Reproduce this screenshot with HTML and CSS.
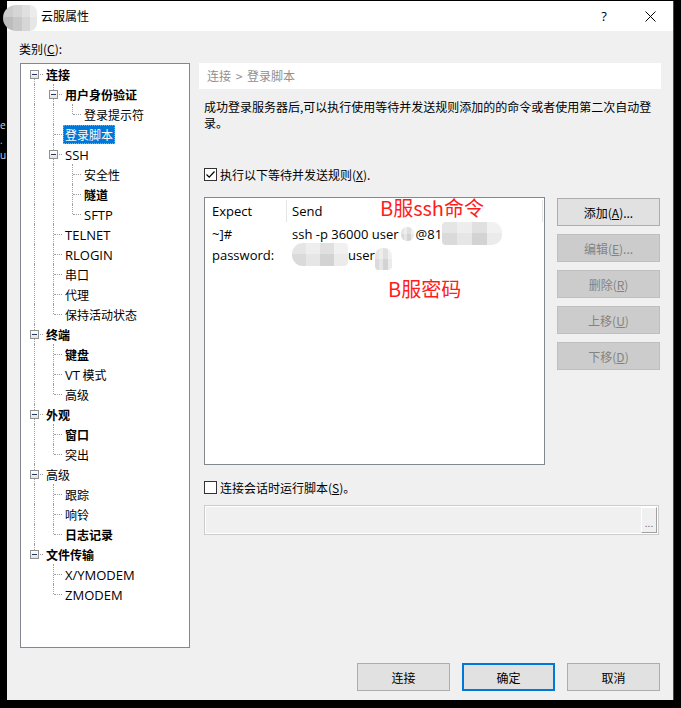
FILE: index.html
```html
<!DOCTYPE html>
<html lang="zh-CN">
<head>
  <meta charset="UTF-8">
  <title>云服属性</title>
  <link rel="stylesheet" href="styles.css">
</head>
<body>
  <div class="screen">
    <div class="backdrop"><span>e</span><span class="dot">.</span><span class="u">u</span></div>

    <div class="dialog">
      <div class="titlebar">
        <span class="app-icon"></span>
        <span class="title">云服属性</span>
        <span class="tb-btn tb-help">?</span>
        <span class="tb-btn">
          <svg width="11" height="11" viewBox="0 0 11 11"><path d="M0.5 0.5 L10.5 10.5 M10.5 0.5 L0.5 10.5" stroke="#000" stroke-width="1" fill="none"/></svg>
        </span>
      </div>

      <div class="body">
        <div class="cat-label">类别(<u>C</u>):</div>

        <div class="main">
          <!-- category tree -->
          <div class="tree">
            <div class="node"><span class="c f"><span class="xp"></span></span><span class="lbl b">连接</span></div>
            <div class="node"><span class="c v"></span><span class="c t"><span class="xp"></span></span><span class="lbl b">用户身份验证</span></div>
            <div class="node"><span class="c v"></span><span class="c v"></span><span class="c e"></span><span class="lbl">登录提示符</span></div>
            <div class="node"><span class="c v"></span><span class="c t"></span><span class="lbl sel">登录脚本</span></div>
            <div class="node"><span class="c v"></span><span class="c t"><span class="xp"></span></span><span class="lbl"><span class="en">SSH</span></span></div>
            <div class="node"><span class="c v"></span><span class="c v"></span><span class="c t"></span><span class="lbl">安全性</span></div>
            <div class="node"><span class="c v"></span><span class="c v"></span><span class="c t"></span><span class="lbl b">隧道</span></div>
            <div class="node"><span class="c v"></span><span class="c v"></span><span class="c e"></span><span class="lbl"><span class="en">SFTP</span></span></div>
            <div class="node"><span class="c v"></span><span class="c t"></span><span class="lbl"><span class="en">TELNET</span></span></div>
            <div class="node"><span class="c v"></span><span class="c t"></span><span class="lbl"><span class="en">RLOGIN</span></span></div>
            <div class="node"><span class="c v"></span><span class="c t"></span><span class="lbl">串口</span></div>
            <div class="node"><span class="c v"></span><span class="c t"></span><span class="lbl">代理</span></div>
            <div class="node"><span class="c v"></span><span class="c e"></span><span class="lbl">保持活动状态</span></div>
            <div class="node"><span class="c t"><span class="xp"></span></span><span class="lbl b">终端</span></div>
            <div class="node"><span class="c v"></span><span class="c t"></span><span class="lbl b">键盘</span></div>
            <div class="node"><span class="c v"></span><span class="c t"></span><span class="lbl"><span class="en">VT</span> 模式</span></div>
            <div class="node"><span class="c v"></span><span class="c e"></span><span class="lbl">高级</span></div>
            <div class="node"><span class="c t"><span class="xp"></span></span><span class="lbl b">外观</span></div>
            <div class="node"><span class="c v"></span><span class="c t"></span><span class="lbl b">窗口</span></div>
            <div class="node"><span class="c v"></span><span class="c e"></span><span class="lbl">突出</span></div>
            <div class="node"><span class="c t"><span class="xp"></span></span><span class="lbl">高级</span></div>
            <div class="node"><span class="c v"></span><span class="c t"></span><span class="lbl">跟踪</span></div>
            <div class="node"><span class="c v"></span><span class="c t"></span><span class="lbl">响铃</span></div>
            <div class="node"><span class="c v"></span><span class="c e"></span><span class="lbl b">日志记录</span></div>
            <div class="node"><span class="c e"><span class="xp"></span></span><span class="lbl b">文件传输</span></div>
            <div class="node"><span class="c"></span><span class="c t"></span><span class="lbl"><span class="en">X/YMODEM</span></span></div>
            <div class="node"><span class="c"></span><span class="c e"></span><span class="lbl"><span class="en">ZMODEM</span></span></div>
          </div>

          <!-- settings page -->
          <div class="panel">
            <div class="crumb">连接 &gt; 登录脚本</div>
            <p class="desc">成功登录服务器后,可以执行使用等待并发送规则添加的的命令或者使用第二次自动登录。</p>

            <div class="check check-first">
              <span class="box">
                <svg width="11" height="11" viewBox="0 0 11 11"><path d="M1.5 5.5 L4.2 8.2 L9.5 2.5" stroke="#000" stroke-width="1.2" fill="none"/></svg>
              </span>
              执行以下等待并发送规则(<u>X</u>).
            </div>

            <div class="rules">
              <div class="listview">
                <div class="lv-head">
                  <span class="col-expect en">Expect</span>
                  <span class="col-send en">Send</span>
                </div>
                <div class="lv-row">
                  <span class="cell-expect">~]#</span>
                  <span class="cell-send">ssh -p 36000 user<span class="blur blur-a"></span>@81<span class="blur blur-b"></span></span>
                </div>
                <div class="lv-row">
                  <span class="cell-expect">password:</span>
                  <span class="cell-send"><span class="blur blur-c"></span>user<span class="blur blur-d"></span></span>
                </div>
                <span class="note note-ssh">B服ssh命令</span>
                <span class="note note-pwd">B服密码</span>
              </div>

              <div class="side-buttons">
                <div class="btn">添加(<u>A</u>)...</div>
                <div class="btn off">编辑(<u>E</u>)...</div>
                <div class="btn off">删除(<u>R</u>)</div>
                <div class="btn off">上移(<u>U</u>)</div>
                <div class="btn off">下移(<u>D</u>)</div>
              </div>
            </div>

            <div class="check check-second">
              <span class="box"></span>
              连接会话时运行脚本(<u>S</u>)。
            </div>

            <div class="script-field">
              <span class="browse">...</span>
            </div>
          </div>
        </div>

        <div class="footer">
          <div class="btn wide">连接</div>
          <div class="btn wide default">确定</div>
          <div class="btn wide">取消</div>
        </div>
      </div>
    </div>
  </div>
</body>
</html>
```

FILE: styles.css
```css
* {
  margin: 0;
  padding: 0;
  box-sizing: border-box;
}

body {
  background: #000;
  font-family: "Noto Sans CJK SC", sans-serif;
  font-size: 12px;
  color: #000;
  overflow: hidden;
}

.screen {
  display: flex;
  height: 708px;
  padding-top: 1px;
}

.en {
  font-family: "Open Sans", "Noto Sans CJK SC", sans-serif;
  font-size: 13px;
}

/* terminal text peeking out behind the dialog */
.backdrop {
  width: 7px;
  overflow: hidden;
  display: flex;
  flex-direction: column;
  gap: 4px;
  padding-top: 119px;
  font-family: "Open Sans", sans-serif;
  font-size: 10px;
  line-height: 11px;
  color: #d4d4d4;
}

.backdrop span { height: 11px; }
.backdrop .dot { color: #9fb8e0; }
.backdrop .u { color: #c6d4ea; }

.dialog {
  width: 667px;
  height: 699px;
  background: #f0f0f0;
  border-right: 1px solid #4a4a4a;
  position: relative;
  display: flex;
  flex-direction: column;
}

/* title bar */
.titlebar {
  height: 30px;
  background: #fff;
  display: flex;
  align-items: center;
  padding-left: 34px;
}

.app-icon {
  position: absolute;
  left: -4px;
  top: 4px;
  width: 34px;
  height: 26px;
  border-radius: 14px 8px 8px 14px;
  background:
    linear-gradient(to bottom, rgba(255,255,255,0.25) 0 45%, transparent 45%),
    linear-gradient(90deg, #bdbdbd 0 30%, #c8c8c8 30% 55%, #d6d6d6 55% 78%, #e6e6e6 78%);
}

.title {
  flex: 1;
  line-height: 30px;
}

.tb-btn {
  width: 46px;
  height: 30px;
  display: flex;
  align-items: center;
  justify-content: center;
}

.tb-help {
  font-family: "Open Sans", sans-serif;
  font-size: 13px;
}

.body {
  flex: 1;
  display: flex;
  flex-direction: column;
  padding: 10px 12px 9px 13px;
}

.cat-label {
  line-height: 16px;
  margin-left: -1px;
  margin-bottom: 6px;
}

.main {
  display: flex;
  gap: 9px;
  height: 585px;
}

/* tree view */
.tree {
  width: 170px;
  background: #fff;
  border: 1px solid #828790;
  padding: 0 0 0 4px;
}

.node {
  display: flex;
  align-items: center;
  height: 20px;
}

.c {
  width: 19px;
  height: 20px;
  flex: none;
  position: relative;
}

.c.v::before,
.c.t::before,
.c.e::before,
.c.f::before {
  content: "";
  position: absolute;
  left: 9px;
  top: 0;
  bottom: 0;
  border-left: 1px dotted #a0a0a0;
}

.c.e::before { bottom: 10px; }
.c.f::before { top: 10px; }

.c.t::after,
.c.e::after,
.c.f::after {
  content: "";
  position: absolute;
  left: 10px;
  right: 1px;
  top: 10px;
  border-top: 1px dotted #a0a0a0;
}

.xp {
  position: absolute;
  left: 5px;
  top: 6px;
  width: 9px;
  height: 9px;
  border: 1px solid #919191;
  background: linear-gradient(#ffffff, #e2e2e2);
  z-index: 1;
}

.xp::after {
  content: "";
  position: absolute;
  left: 1px;
  top: 3px;
  width: 5px;
  height: 1px;
  background: #26385c;
}

.lbl {
  padding: 0 2px;
  line-height: 19px;
  height: 19px;
  white-space: nowrap;
}

.lbl.b { font-weight: 700; }

.lbl.sel {
  background: #0078d7;
  color: #fff;
  outline: 1px dotted #e39a4a;
  outline-offset: -1px;
}

/* right side page */
.panel {
  flex: 1;
  display: flex;
  flex-direction: column;
}

.crumb {
  height: 26px;
  line-height: 26px;
  background: #fff;
  color: #8f8f8f;
  padding-left: 8px;
  word-spacing: 2px;
}

.desc {
  margin: 10px 0 0 5px;
  line-height: 16px;
  width: 457px;
}

.check {
  display: flex;
  align-items: center;
  height: 16px;
  margin-left: 5px;
}

.check-first { margin-top: 35px; }
.check-second { margin-top: 14px; }

.box {
  width: 13px;
  height: 13px;
  border: 1px solid #333;
  background: #fff;
  margin-right: 3px;
  display: flex;
}

.rules {
  display: flex;
  gap: 12px;
  margin: 15px 0 0 5px;
}

.listview {
  width: 341px;
  height: 268px;
  background: #fff;
  border: 1px solid #828790;
  position: relative;
}

.lv-head {
  display: flex;
  height: 25px;
  padding-top: 2px;
}

.col-expect,
.col-send {
  line-height: 22px;
  height: 22px;
  border-right: 1px solid #e5e5e5;
}

.col-expect { width: 82px; padding-left: 7px; }
.col-send { width: 256px; padding-left: 5px; }

.lv-row {
  display: flex;
  align-items: center;
  height: 21px;
  font-family: "Open Sans", sans-serif;
  font-size: 13px;
}

.cell-expect { width: 82px; padding-left: 7px; }
.cell-send { padding-left: 5px; white-space: nowrap; display: flex; align-items: center; }

/* pixelated privacy patches */
.blur {
  display: inline-block;
  background:
    linear-gradient(to bottom, rgba(255,255,255,0.3) 0 50%, transparent 50%),
    linear-gradient(90deg, #dadada 0 25%, #e6e6e6 25% 50%, #d3d3d3 50% 75%, #ebebeb 75%);
}

.blur-a { width: 13px; height: 14px; margin: 0 2px; border-radius: 6px; }
.blur-b { width: 60px; height: 23px; border-radius: 4px 10px 10px 4px; }
.blur-c { width: 56px; height: 23px; border-radius: 11px 4px 4px 11px; }
.blur-d { width: 17px; height: 22px; margin-top: 8px; border-radius: 8px 8px 4px 4px; }

.note {
  position: absolute;
  color: #ff1c1c;
  font-size: 20px;
  line-height: 20px;
  white-space: nowrap;
}

.note-ssh { left: 175px; top: 0; }
.note-pwd { left: 183px; top: 81px; }

/* buttons */
.side-buttons {
  width: 103px;
  display: flex;
  flex-direction: column;
  gap: 8px;
  padding-top: 1px;
}

.btn {
  height: 28px;
  border: 1px solid #adadad;
  background: #e1e1e1;
  display: flex;
  align-items: center;
  justify-content: center;
}

.btn.off {
  background: #cccccc;
  border-color: #bfbfbf;
  color: #838383;
}

.btn.wide { width: 93px; }
.btn.default { border: 2px solid #0078d7; }

.script-field {
  margin: 10px 0 0 5px;
  width: 455px;
  height: 30px;
  border: 1px solid #cccccc;
  box-shadow: inset 0 0 0 1px #fff;
  display: flex;
  justify-content: flex-end;
  padding: 1px 1px 1px 0;
}

.browse {
  width: 16px;
  height: 26px;
  border: 1px solid;
  border-color: #fff #a0a0a0 #a0a0a0 #fff;
  color: #6d6d6d;
  font-size: 10px;
  line-height: 30px;
  text-align: center;
  overflow: hidden;
}

.footer {
  margin: 15px 1px 0 0;
  display: flex;
  justify-content: flex-end;
  gap: 12px;
}
```
